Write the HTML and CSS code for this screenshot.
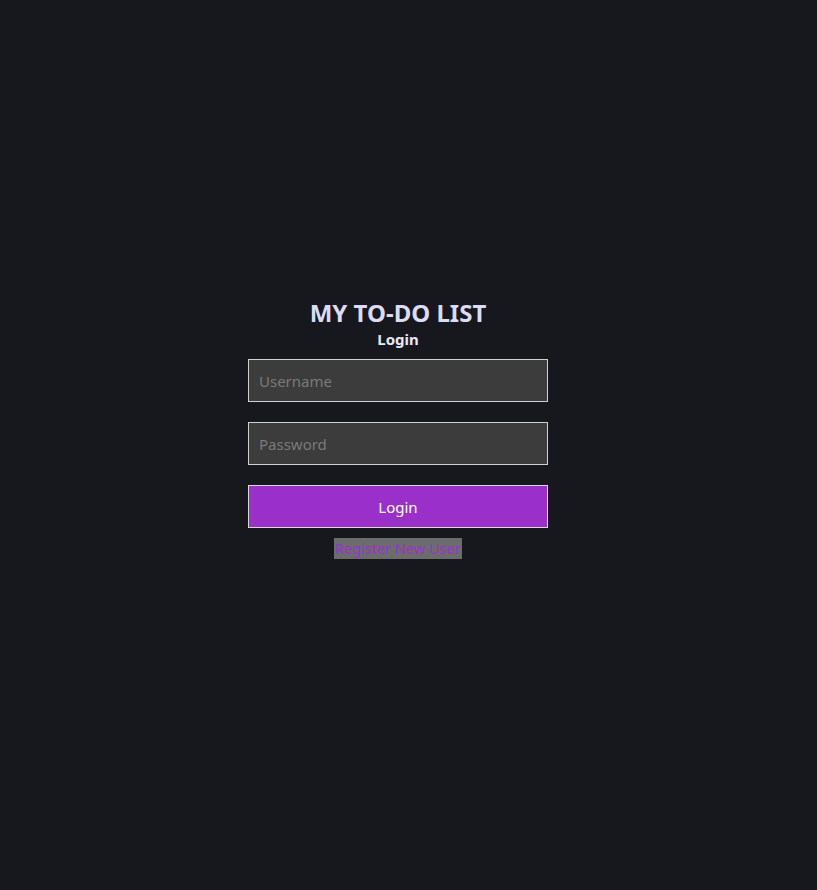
FILE: index.html
```html
<!DOCTYPE html>
<html lang="en">
<head>
<meta charset="utf-8">
<title>My To-Do List</title>
<link rel="stylesheet" href="styles.css">
</head>
<body>
<main class="page">
  <form class="login-card">
    <h1 class="title">MY TO-DO LIST</h1>
    <h2 class="subtitle">Login</h2>
    <input class="field" type="text" placeholder="Username">
    <input class="field" type="password" placeholder="Password">
    <button class="submit" type="button">Login</button>
    <a class="register" href="#">Register New User</a>
  </form>
</main>
</body>
</html>
```

FILE: styles.css
```css
html, body {
  margin: 0;
  padding: 0;
  background: #17181d;
}

body {
  font-family: "Noto Sans", "Open Sans", sans-serif;
  color: #e0e0f5;
}

.page {
  min-height: 890px;
  padding-right: 21px;
  display: flex;
  justify-content: center;
  align-items: flex-start;
}

.login-card {
  width: 300px;
  margin-top: 298px;
  display: flex;
  flex-direction: column;
  align-items: center;
}

.title {
  margin: 0;
  font-size: 24px;
  line-height: 30px;
  font-weight: 700;
  color: #dcdcf6;
}

.subtitle {
  margin: 0 0 9px 0;
  font-size: 15px;
  line-height: 22px;
  font-weight: 700;
  color: #e8e8fa;
}

.field {
  box-sizing: border-box;
  width: 300px;
  height: 43px;
  margin: 0 0 20px 0;
  padding: 0 10px;
  background: #3c3c3c;
  border: 1px solid #cfcfcf;
  border-radius: 0;
  font-family: inherit;
  font-size: 15px;
  color: #ddd;
  outline: none;
}

.field::placeholder {
  color: #7a7a7a;
}

.submit {
  box-sizing: border-box;
  width: 300px;
  height: 43px;
  margin: 0 0 10px 0;
  background: #9a30c9;
  border: 1px solid #d8d8d8;
  border-radius: 0;
  font-family: inherit;
  font-size: 15px;
  color: #ffffff;
}

.register {
  display: inline-block;
  background: #6c6c6c;
  color: #9b30d0;
  text-decoration: none;
  font-size: 14.5px;
  line-height: 21px;
  padding: 0 1px;
}
```
